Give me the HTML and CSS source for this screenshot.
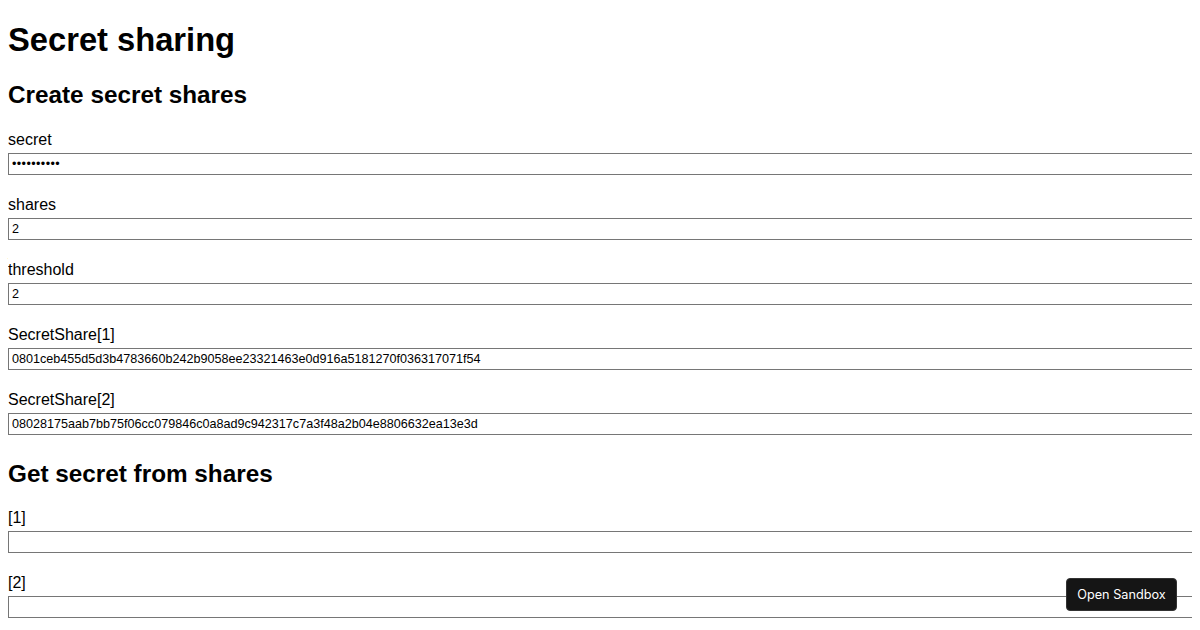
FILE: index.html
```html
<!DOCTYPE html>
<html>
<head>
<meta charset="utf-8">
<link rel="stylesheet" href="styles.css">
</head>
<body>
<h1 class="title">Secret sharing</h1>
<h2 class="section">Create secret shares</h2>
<div class="field">
  <label class="label">secret</label>
  <input class="input input-password" type="password" value="mysecret12">
</div>
<div class="field">
  <label class="label">shares</label>
  <input class="input" type="text" value="2">
</div>
<div class="field">
  <label class="label">threshold</label>
  <input class="input" type="text" value="2">
</div>
<div class="field">
  <label class="label">SecretShare[1]</label>
  <input class="input" type="text" value="0801ceb455d5d3b4783660b242b9058ee23321463e0d916a5181270f036317071f54">
</div>
<div class="field">
  <label class="label">SecretShare[2]</label>
  <input class="input" type="text" value="08028175aab7bb75f06cc079846c0a8ad9c942317c7a3f48a2b04e8806632ea13e3d">
</div>
<h2 class="section section-second">Get secret from shares</h2>
<div class="field">
  <label class="label">[1]</label>
  <input class="input" type="text" value="">
</div>
<div class="field">
  <label class="label">[2]</label>
  <input class="input" type="text" value="">
</div>
<button class="sandbox">Open Sandbox</button>
</body>
</html>
```
FILE: styles.css
```css
html {
  overflow: hidden;
}
html, body {
  font-family: "Liberation Sans", Arial, sans-serif;
  color: #000;
  background: #fff;
}
body {
  margin: 8px;
}
.title {
  font-size: 32.7px;
  font-weight: bold;
  margin: 13.4px 0 21.44px;
}
.section {
  font-size: 24.3px;
  font-weight: bold;
  margin: 19.92px 0 21.92px;
}
.section-second {
  margin-top: 25px;
  margin-bottom: 21px;
}
.field {
  margin-bottom: 21px;
}
.field:last-of-type {
  margin-bottom: 0;
}
.label {
  display: block;
  font-size: 16px;
  line-height: normal;
}
.input {
  display: block;
  box-sizing: border-box;
  width: calc(100% + 8px);
  height: 22px;
  margin-top: 4px;
  padding: 1px 3px;
  border: 1px solid #767676;
  border-radius: 0;
  background: #fff;
  color: #000;
  font-family: "Liberation Sans", Arial, sans-serif;
  font-size: 12.6px;
}
.input-password {
  letter-spacing: 0.4px;
}
.sandbox {
  position: fixed;
  right: 23px;
  bottom: 19px;
  width: 111px;
  height: 33px;
  padding: 0;
  background: #151515;
  color: #fff;
  border: 1px solid #333;
  border-radius: 4px;
  font-family: Inter, "Liberation Sans", sans-serif;
  font-size: 12.7px;
}
```
